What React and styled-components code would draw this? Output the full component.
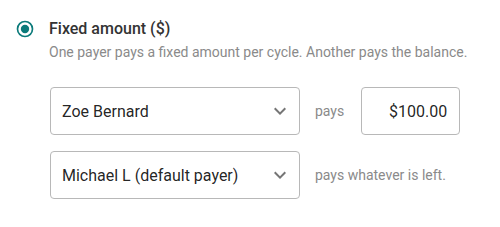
import React from "react";
import styled, { createGlobalStyle } from "styled-components";

const Global = createGlobalStyle`
  html, body { margin: 0; padding: 0; background: #fff; }
  body { font-family: Roboto, "Noto Sans", Arial, sans-serif; }
  * { box-sizing: border-box; }
`;

const Page = styled.div`
  padding: 18px 0 0 15px;
  width: 500px;
`;

const Header = styled.label`
  display: flex;
  align-items: center;
  gap: 14px;
  height: 21px;
`;

const RadioIcon = styled.svg`
  width: 20px;
  height: 20px;
  flex: none;
  color: #0b7a7a;
`;

const Title = styled.span`
  font-size: 16px;
  line-height: 20px;
  font-weight: 500;
  color: #333;
`;

const Description = styled.div`
  margin: 3px 0 0 34px;
  font-size: 14px;
  line-height: 20px;
  color: #8a8a8a;
`;

const Rows = styled.div`
  margin: 25px 0 0 35px;
  display: flex;
  flex-direction: column;
  gap: 16px;
`;

const Row = styled.div`
  display: flex;
  align-items: center;
`;

const Select = styled.div`
  position: relative;
  width: 250px;
  height: 48px;
  border: 1px solid #b8b8b8;
  border-radius: 4px;
  display: flex;
  align-items: center;
  padding-left: 11px;
  font-size: 16px;
  color: rgba(0, 0, 0, 0.87);
`;

const Chevron = styled.svg`
  position: absolute;
  right: 7px;
  top: 50%;
  transform: translateY(-50%);
  width: 24px;
  height: 24px;
  color: rgba(0, 0, 0, 0.54);
`;

const Note = styled.span`
  margin-left: 15px;
  font-size: 14px;
  color: #8a8a8a;
`;

const Amount = styled.div`
  margin-left: 17px;
  width: 99px;
  height: 48px;
  border: 1px solid #b8b8b8;
  border-radius: 4px;
  display: flex;
  align-items: center;
  justify-content: flex-end;
  padding-right: 12px;
  font-size: 16px;
  color: rgba(0, 0, 0, 0.87);
`;

const ExpandMore = () => (
  <Chevron viewBox="0 0 24 24" fill="currentColor">
    <path d="M16.59 8.59 12 13.17 7.41 8.59 6 10l6 6 6-6z" />
  </Chevron>
);

export default function App() {
  return (
    <>
      <Global />
      <Page>
        <Header>
          <RadioIcon viewBox="0 0 24 24">
            <circle cx="12" cy="12" r="9" fill="none" stroke="currentColor" strokeWidth="2" />
            <circle cx="12" cy="12" r="5" fill="currentColor" />
          </RadioIcon>
          <Title>Fixed amount ($)</Title>
        </Header>
        <Description>
          One payer pays a fixed amount per cycle. Another pays the balance.
        </Description>
        <Rows>
          <Row>
            <Select>
              Zoe Bernard
              <ExpandMore />
            </Select>
            <Note>pays</Note>
            <Amount>$100.00</Amount>
          </Row>
          <Row>
            <Select>
              Michael L (default payer)
              <ExpandMore />
            </Select>
            <Note>pays whatever is left.</Note>
          </Row>
        </Rows>
      </Page>
    </>
  );
}
